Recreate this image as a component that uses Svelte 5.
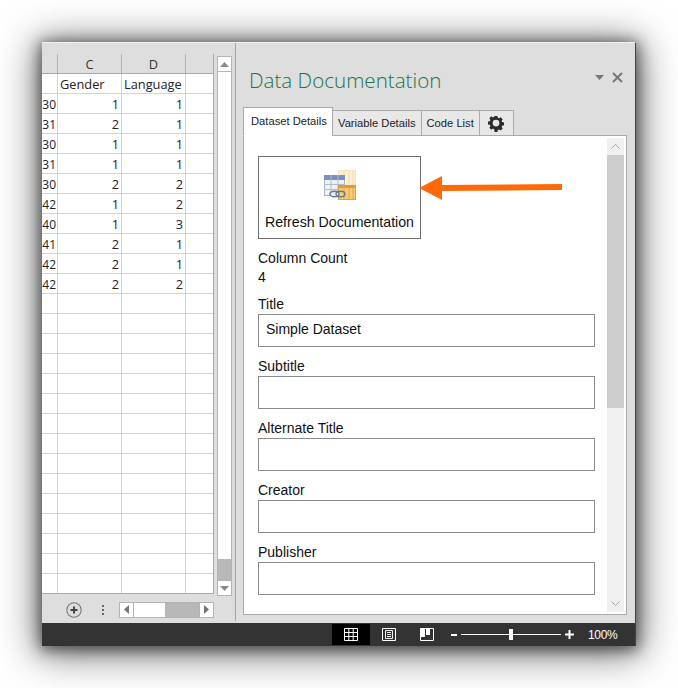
<script>
	const rows = [
		['30', 1, 1],
		['31', 2, 1],
		['30', 1, 1],
		['31', 1, 1],
		['30', 2, 2],
		['42', 1, 2],
		['40', 1, 3],
		['41', 2, 1],
		['42', 2, 1],
		['42', 2, 2]
	];
	const blankRows = Array(15).fill(0);
	const fields = [
		{ label: 'Title', value: 'Simple Dataset' },
		{ label: 'Subtitle', value: '' },
		{ label: 'Alternate Title', value: '' },
		{ label: 'Creator', value: '' },
		{ label: 'Publisher', value: '' }
	];
	const tabs = ['Dataset Details', 'Variable Details', 'Code List'];
</script>

<div class="page">
	<div class="window">
		<div class="main">
			<section class="left">
				<div class="sheet-area">
					<div class="sheet">
						<div class="col-heads">
							<div class="head b"></div>
							<div class="head c">C</div>
							<div class="head c">D</div>
							<div class="head e"></div>
						</div>
						<div class="row">
							<div class="cell b"></div>
							<div class="cell c text">Gender</div>
							<div class="cell c text">Language</div>
							<div class="cell e"></div>
						</div>
						{#each rows as r}
							<div class="row">
								<div class="cell b">{r[0]}</div>
								<div class="cell c">{r[1]}</div>
								<div class="cell c">{r[2]}</div>
								<div class="cell e"></div>
							</div>
						{/each}
						{#each blankRows as _}
							<div class="row">
								<div class="cell b"></div>
								<div class="cell c"></div>
								<div class="cell c"></div>
								<div class="cell e"></div>
							</div>
						{/each}
					</div>
					<div class="vscroll">
						<div class="sbtn">
							<svg width="9" height="5" viewBox="0 0 9 5"><path d="M4.500 0L9 5H0z" fill="#8a8a8a" /></svg>
						</div>
						<div class="vthumb"></div>
						<div class="vtrack"></div>
						<div class="sbtn down">
							<svg width="9" height="5" viewBox="0 0 9 5"><path d="M0 0h9L4.500 5z" fill="#8a8a8a" /></svg>
						</div>
					</div>
				</div>
				<div class="sheet-foot">
					<svg class="add" width="16" height="16" viewBox="0 0 16 16">
						<circle cx="8" cy="8" r="7.200" fill="none" stroke="#777" stroke-width="1.100" />
						<path d="M8 4.500v7M4.500 8h7" stroke="#444" stroke-width="2" />
					</svg>
					<div class="dots"><i></i><i></i><i></i></div>
					<div class="hscroll">
						<div class="hbtn">
							<svg width="5" height="9" viewBox="0 0 5 9"><path d="M5 0v9L0 4.500z" fill="#777" /></svg>
						</div>
						<div class="hthumb"></div>
						<div class="htrack"></div>
						<div class="hbtn right">
							<svg width="5" height="9" viewBox="0 0 5 9"><path d="M0 0l5 4.500L0 9z" fill="#777" /></svg>
						</div>
					</div>
				</div>
			</section>

			<section class="panel">
				<div class="panel-head">
					<h1>Data Documentation</h1>
					<div class="panel-controls">
						<svg width="9" height="5" viewBox="0 0 9 5"><path d="M0 0h9L4.500 5z" fill="#777" /></svg>
						<svg width="11" height="11" viewBox="0 0 11 11"><path d="M1 1l9 9M10 1l-9 9" stroke="#777" stroke-width="2" /></svg>
					</div>
				</div>
				<div class="tabs">
					{#each tabs as t, i}
						<div class="tab" class:active={i === 0}>{t}</div>
					{/each}
					<div class="tab gear">
						<svg width="18" height="18" viewBox="0 0 18 18">
							<path
								fill="#2b2b2b"
								fill-rule="evenodd"
								d="M7.400 1h3.200l.4 2.100 1.500.6 1.800-1.200 2.200 2.200-1.200 1.800.6 1.500 2.100.4v3.200l-2.100.4-.6 1.500 1.200 1.800-2.200 2.200-1.800-1.200-1.500.6-.4 2.100H7.400L7 15.900l-1.500-.6-1.800 1.200-2.200-2.200 1.200-1.800-.6-1.500L0 10.600V7.400L2.100 7l.6-1.500L1.500 3.700l2.200-2.200 1.800 1.200L7 2.100zM9 5.200a3.800 3.800 0 1 0 0 7.600a3.800 3.800 0 1 0 0-7.600z"
								transform="translate(1 1) scale(.89)"
							/>
						</svg>
					</div>
				</div>
				<div class="tab-body">
					<div class="form">
						<button class="refresh">
							<svg width="36" height="32" viewBox="0 0 36 32">
								<rect x="16.500" y="0.500" width="17" height="16" fill="#fcefd2" stroke="#f3e3bf" />
								<path d="M22 1v15M27 1v15M31 1v15" stroke="#efdcb0" />
								<rect x="2.500" y="5.500" width="20" height="20" fill="#eef1f6" stroke="#aeb6c4" />
								<rect x="2" y="5" width="21" height="5" fill="#7b90c0" />
								<path d="M2 14.500h20M2 19.500h20M9 5v20M16 5v20" stroke="#b4bcca" />
								<rect x="16.500" y="15.500" width="17" height="14" fill="#f8cd74" stroke="#d8a545" />
								<rect x="16" y="15" width="18" height="3" fill="#d99f33" />
								<path d="M22 18v11M27 18v11M31 18v11" stroke="#dca644" />
								<ellipse cx="12.500" cy="24" rx="4.500" ry="2.800" fill="#e8edf3" stroke="#66778f" stroke-width="1.400" />
								<ellipse cx="18.500" cy="24" rx="4.500" ry="2.800" fill="none" stroke="#66778f" stroke-width="1.400" />
							</svg>
							<span>Refresh Documentation</span>
						</button>
						<div class="stat">Column Count</div>
						<div class="stat last">4</div>
						{#each fields as f}
							<div class="field">
								<div class="field-label">{f.label}</div>
								<div class="input">{f.value}</div>
							</div>
						{/each}
					</div>
					<div class="panel-scroll">
						<div class="pbtn">
							<svg width="9" height="5" viewBox="0 0 9 5"><path d="M0.500 4.500l4-4 4 4" fill="none" stroke="#a8a8a8" /></svg>
						</div>
						<div class="pthumb"></div>
						<div class="ptrack"></div>
						<div class="pbtn">
							<svg width="9" height="5" viewBox="0 0 9 5"><path d="M0.500 .5l4 4 4-4" fill="none" stroke="#a8a8a8" /></svg>
						</div>
					</div>
				</div>
			</section>
		</div>

		<footer class="status">
			<div class="view current">
				<svg width="14" height="13" viewBox="0 0 14 13">
					<path d="M.5.500h13v12H.5zM.5 4.500h13M.5 8.500h13M4.800.5v12M9.200.5v12" fill="none" stroke="#fff" />
				</svg>
			</div>
			<div class="view">
				<svg width="14" height="13" viewBox="0 0 14 13">
					<path d="M.5.500h13v12H.5z" fill="none" stroke="#fff" />
					<path d="M3.500 2.500h7v8h-7zM5 4.500h4M5 6.500h4M5 8.500h4" fill="none" stroke="#eee" />
				</svg>
			</div>
			<div class="view">
				<svg width="14" height="13" viewBox="0 0 14 13">
					<path d="M.5.500h13v12H.5z" fill="none" stroke="#fff" />
					<path d="M1 1h4v8H1zM6 1h4v6H6z" fill="#fff" />
				</svg>
			</div>
			<div class="zoom">
				<span class="minus"></span>
				<div class="slider"><span class="knob"></span></div>
				<svg class="plus" width="9" height="9" viewBox="0 0 9 9"><path d="M4.500 0v9M0 4.500h9" stroke="#fff" stroke-width="2" /></svg>
			</div>
			<div class="pct">100%</div>
		</footer>

		<svg class="arrow" width="146" height="28" viewBox="0 0 146 28">
			<path d="M1 14L24 2v9l120-1v6L24 17v9z" fill="#ff6a08" />
		</svg>
	</div>
</div>

<style>
	:global(body) {
		margin: 0;
		background: #fff;
	}

	.page {
		box-sizing: border-box;
		height: 688px;
		padding: 42px 0 0 42px;
		overflow: hidden;
	}

	.window {
		position: relative;
		box-sizing: border-box;
		display: flex;
		flex-direction: column;
		width: 594px;
		height: 604px;
		background: #dedede;
		border-top: 1px solid #f2f2f2;
		border-right: 1px solid #444;
		box-shadow:
			0 4px 38px 4px rgba(0, 0, 0, 0.55),
			0 2px 14px 2px rgba(0, 0, 0, 0.55);
		font-family: 'Liberation Sans', Arial, sans-serif;
	}

	.main {
		flex: 1;
		display: flex;
		min-height: 0;
	}

	.left {
		box-sizing: border-box;
		width: 194px;
		height: 578px;
		padding-top: 11px;
		border-right: 1px solid #a6a6a6;
		display: flex;
		flex-direction: column;
	}

	.sheet-area {
		display: flex;
		height: 542px;
	}

	.sheet {
		box-sizing: border-box;
		width: 172px;
		height: 540px;
		overflow: hidden;
		border-right: 1px solid #a9a9a9;
		border-bottom: 1px solid #a9a9a9;
		font-family: 'Open Sans', sans-serif;
		font-size: 12.800px;
		color: #222;
	}

	.col-heads {
		display: flex;
		height: 20px;
		border-bottom: 1px solid #a9a9a9;
		box-sizing: border-box;
	}

	.head {
		box-sizing: border-box;
		border-right: 1px solid #b5b5b5;
		text-align: center;
		line-height: 20px;
		color: #333;
	}

	.row {
		display: flex;
		height: 20px;
		box-sizing: border-box;
		background: #fff;
		border-bottom: 1px solid #d4d4d4;
	}

	.cell {
		box-sizing: border-box;
		border-right: 1px solid #d4d4d4;
		text-align: right;
		line-height: 21px;
		padding-right: 2px;
		overflow: hidden;
	}

	.b {
		width: 16px;
		padding-right: 1px;
		font-size: 12px;
	}

	.c {
		width: 64px;
	}

	.e {
		width: 27px;
		border-right: 0;
	}

	.head.e {
		border-right: 0;
		background: #dedede;
	}

	.text {
		text-align: left;
		padding-left: 2px;
		white-space: nowrap;
	}

	.vscroll {
		box-sizing: border-box;
		width: 15px;
		height: 540px;
		margin: 2px 0 0 3px;
		border: 1px solid #b4b4b4;
		background: #fff;
		display: flex;
		flex-direction: column;
	}

	.sbtn {
		height: 14px;
		display: flex;
		align-items: center;
		justify-content: center;
		border-bottom: 1px solid #b4b4b4;
		flex: none;
	}

	.sbtn.down {
		border-bottom: 0;
		border-top: 1px solid #b4b4b4;
	}

	.vthumb {
		flex: 1;
	}

	.vtrack {
		height: 21px;
		background: #b8b8b8;
	}

	.sheet-foot {
		display: flex;
		align-items: center;
		height: 24px;
		margin-top: 2px;
	}

	.add {
		margin-left: 24px;
	}

	.dots {
		display: flex;
		flex-direction: column;
		gap: 2px;
		margin-left: 20px;
	}

	.dots i {
		width: 2px;
		height: 2px;
		background: #666;
	}

	.hscroll {
		box-sizing: border-box;
		display: flex;
		width: 95px;
		height: 16px;
		margin-left: 15px;
		border: 1px solid #b4b4b4;
		background: #fff;
	}

	.hbtn {
		box-sizing: border-box;
		width: 14px;
		display: flex;
		align-items: center;
		justify-content: center;
		border-right: 1px solid #b4b4b4;
	}

	.hbtn.right {
		border-right: 0;
		border-left: 1px solid #b4b4b4;
	}

	.hthumb {
		width: 31px;
	}

	.htrack {
		flex: 1;
		background: #b8b8b8;
	}

	.panel {
		flex: 1;
		min-width: 0;
		padding: 0 8px 0 7px;
		display: flex;
		flex-direction: column;
	}

	.panel-head {
		box-sizing: border-box;
		display: flex;
		align-items: flex-start;
		justify-content: space-between;
		height: 64px;
		padding: 23px 4px 0 6px;
	}

	h1 {
		margin: 0;
		font-family: 'Open Sans', sans-serif;
		font-weight: 300;
		font-size: 20.600px;
		line-height: 28px;
		color: #217346;
	}

	.panel-controls {
		display: flex;
		align-items: center;
		gap: 8px;
		margin-top: 6px;
	}

	.tabs {
		display: flex;
		align-items: flex-end;
		height: 29px;
		position: relative;
		z-index: 1;
	}

	.tab {
		box-sizing: border-box;
		height: 26px;
		padding: 0 5px;
		background: #e8e8e8;
		border: 1px solid #aaa;
		font-size: 11.200px;
		line-height: 24px;
		color: #222;
		white-space: nowrap;
	}

	.tab + .tab {
		margin-left: -1px;
	}

	.tab.active {
		height: 29px;
		width: 90px;
		padding: 0 7px;
		background: #fff;
		border-bottom-color: #fff;
		line-height: 26px;
	}

	.tab.gear {
		display: flex;
		align-items: center;
		width: 35px;
		padding: 0 0 0 7px;
	}

	.tab-body {
		box-sizing: border-box;
		display: flex;
		height: 480px;
		margin-top: -1px;
		padding: 2px;
		background: #fff;
		border: 1px solid #aaa;
	}

	.form {
		flex: 1;
		min-width: 0;
		padding: 18px 12px 0 12px;
		overflow: hidden;
		font-size: 14px;
		color: #111;
	}

	.refresh {
		box-sizing: border-box;
		display: flex;
		flex-direction: column;
		align-items: center;
		width: 163px;
		height: 83px;
		margin: 0 0 10px;
		padding: 13px 0 0;
		background: #fff;
		border: 1px solid #6e6e6e;
		font: inherit;
		font-size: 14.200px;
		color: #111;
		cursor: pointer;
	}

	.refresh span {
		margin-top: 10px;
		line-height: 20px;
		white-space: nowrap;
	}

	.stat {
		line-height: 19px;
	}

	.stat.last {
		margin-bottom: 7px;
	}

	.field {
		margin-bottom: 9px;
	}

	.field-label {
		line-height: 20px;
	}

	.input {
		box-sizing: border-box;
		height: 33px;
		padding: 0 7px;
		border: 1px solid #8c8c8c;
		line-height: 29px;
	}

	.panel-scroll {
		width: 17px;
		background: #f0f0f0;
		display: flex;
		flex-direction: column;
		flex: none;
	}

	.pbtn {
		height: 17px;
		flex: none;
		display: flex;
		align-items: center;
		justify-content: center;
	}

	.pthumb {
		height: 253px;
		flex: none;
		background: #cdcdcd;
	}

	.ptrack {
		flex: 1;
	}

	.status {
		flex: none;
		display: flex;
		align-items: center;
		height: 23px;
		padding-left: 290px;
		background: #333;
		color: #fff;
		font-size: 12px;
	}

	.view {
		width: 38px;
		height: 21px;
		display: flex;
		align-items: center;
		justify-content: center;
	}

	.view.current {
		background: #000;
	}

	.zoom {
		display: flex;
		align-items: center;
		margin-left: 5px;
	}

	.minus {
		width: 6px;
		height: 2px;
		background: #fff;
	}

	.slider {
		position: relative;
		width: 100px;
		height: 1px;
		margin: 0 4px 0 4px;
		background: #fff;
	}

	.knob {
		position: absolute;
		left: 48px;
		top: -5px;
		width: 4px;
		height: 11px;
		background: #fff;
	}

	.pct {
		margin-left: 14px;
		letter-spacing: -0.3px;
	}

	.arrow {
		position: absolute;
		left: 376px;
		top: 131px;
		z-index: 2;
	}
</style>
